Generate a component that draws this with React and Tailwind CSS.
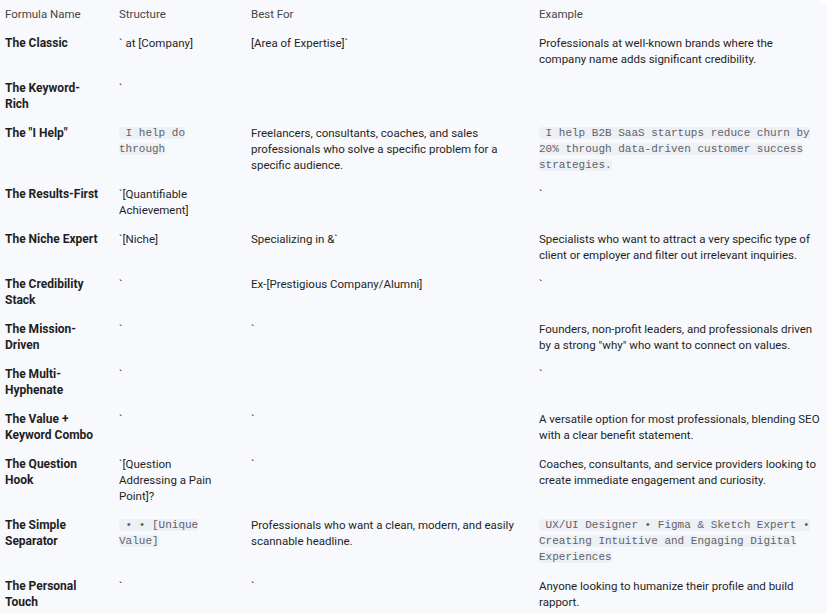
const rows = [
  {
    name: "The Classic",
    structure: "` at [Company]",
    best: "[Area of Expertise]`",
    example:
      "Professionals at well-known brands where the company name adds significant credibility.",
  },
  { name: "The Keyword-Rich", structure: "`", best: "", example: "" },
  {
    name: 'The "I Help"',
    structure: { code: "\u00a0I help do through" },
    best: "Freelancers, consultants, coaches, and sales professionals who solve a specific problem for a specific audience.",
    example: {
      code: "\u00a0I help B2B SaaS startups reduce churn by 20% through data-driven customer success strategies.",
    },
  },
  {
    name: "The Results-First",
    structure: "`[Quantifiable Achievement]",
    best: "",
    example: "`",
  },
  {
    name: "The Niche Expert",
    structure: "`[Niche]",
    best: "Specializing in &`",
    example:
      "Specialists who want to attract a very specific type of client or employer and filter out irrelevant inquiries.",
  },
  {
    name: "The Credibility Stack",
    structure: "`",
    best: "Ex-[Prestigious Company/Alumni]",
    example: "`",
  },
  {
    name: "The Mission-Driven",
    structure: "`",
    best: "`",
    example:
      'Founders, non-profit leaders, and professionals driven by a strong "why" who want to connect on values.',
  },
  { name: "The Multi-Hyphenate", structure: "`", best: "", example: "`" },
  {
    name: "The Value + Keyword Combo",
    structure: "`",
    best: "`",
    example:
      "A versatile option for most professionals, blending SEO with a clear benefit statement.",
  },
  {
    name: "The Question Hook",
    structure: "`[Question Addressing a Pain Point]?",
    best: "`",
    example:
      "Coaches, consultants, and service providers looking to create immediate engagement and curiosity.",
  },
  {
    name: "The Simple Separator",
    structure: { code: "\u00a0• • [Unique Value]" },
    best: "Professionals who want a clean, modern, and easily scannable headline.",
    example: {
      code: "\u00a0UX/UI Designer • Figma & Sketch Expert • Creating Intuitive and Engaging Digital Experiences",
    },
  },
  {
    name: "The Personal Touch",
    structure: "`",
    best: "`",
    example:
      "Anyone looking to humanize their profile and build rapport.",
  },
];

function Cell({ value }) {
  if (value && typeof value === "object") {
    // mono strut on the wrapper so code lines keep a 16px pitch
    return (
      <div className="text-[11px] leading-4 font-['Liberation_Mono',monospace]">
        <code className="rounded-[3px] bg-[#edf0f5] text-[#5f6368] [box-decoration-break:clone] [-webkit-box-decoration-break:clone]">
          {value.code}
        </code>
      </div>
    );
  }
  return value;
}

export default function App() {
  return (
    <div className="min-h-screen bg-white font-['Roboto',sans-serif]">
      <div className="w-[827px] h-[614px] overflow-hidden rounded-tr-[10px] bg-[#f8f9fc]">
        <table className="table-fixed border-collapse text-left text-[11.5px] leading-4 text-[#1f1f1f]">
          <colgroup>
            <col className="w-[119px]" />
            <col className="w-[132px]" />
            <col className="w-[288px]" />
            <col className="w-[288px]" />
          </colgroup>
          <thead>
            <tr className="text-[#444746]">
              <th className="pl-[5px] pr-[17px] pt-[6px] pb-[7px] font-normal align-top">Formula Name</th>
              <th className="pr-[20px] pt-[6px] pb-[7px] font-normal align-top">Structure</th>
              <th className="pr-[16px] pt-[6px] pb-[7px] font-normal align-top">Best For</th>
              <th className="pr-[6px] pt-[6px] pb-[7px] font-normal align-top">Example</th>
            </tr>
          </thead>
          <tbody>
            {rows.map((r) => (
              <tr key={r.name}>
                <td className="pl-[5px] pr-[17px] pt-[6px] pb-[7px] align-top text-xs font-bold">{r.name}</td>
                <td className="pr-[20px] pt-[6px] pb-[7px] align-top">
                  <Cell value={r.structure} />
                </td>
                <td className="pr-[16px] pt-[6px] pb-[7px] align-top">
                  <Cell value={r.best} />
                </td>
                <td className="pr-[6px] pt-[6px] pb-[7px] align-top">
                  <Cell value={r.example} />
                </td>
              </tr>
            ))}
          </tbody>
        </table>
      </div>
    </div>
  );
}
